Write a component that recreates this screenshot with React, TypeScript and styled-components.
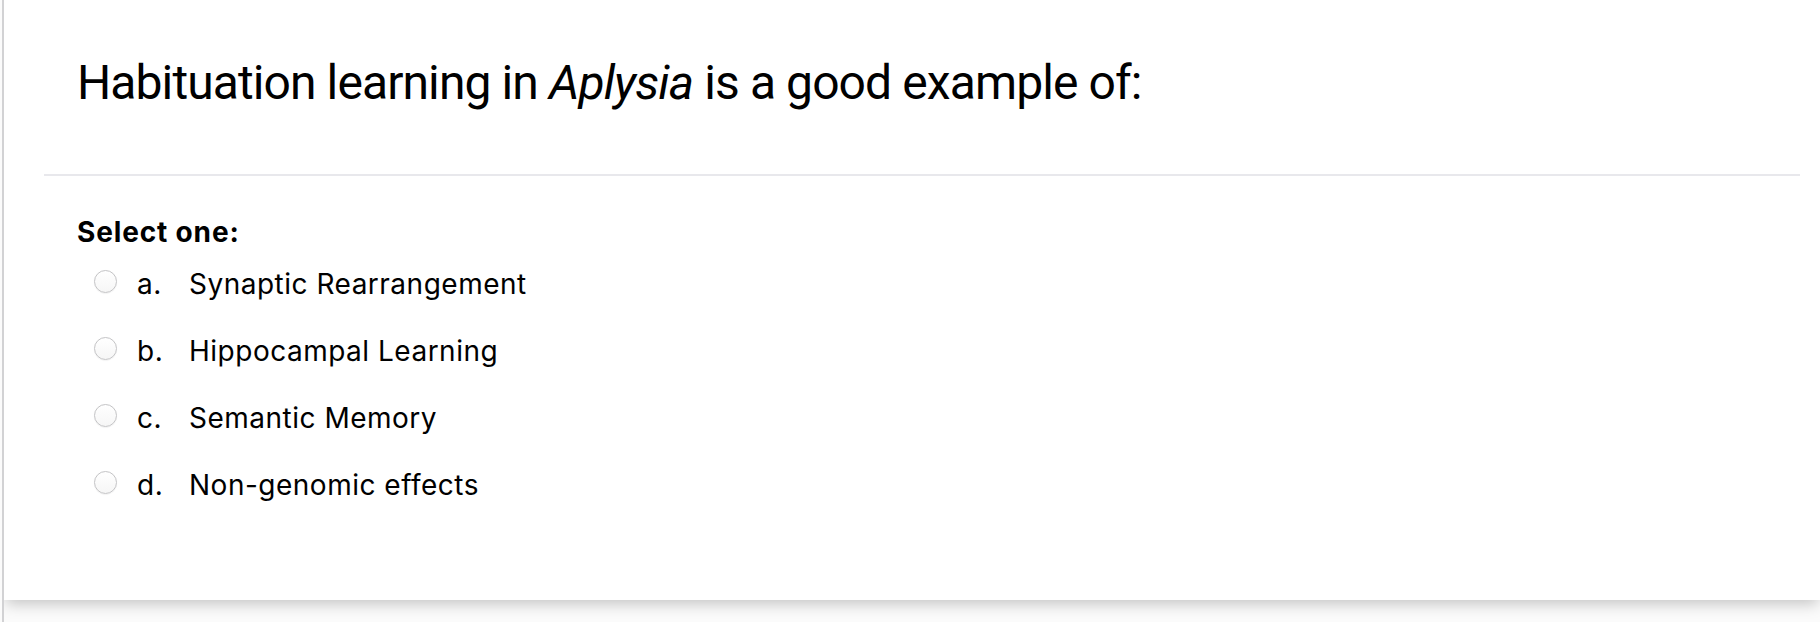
import React from "react";
import styled, { createGlobalStyle } from "styled-components";

const GlobalStyle = createGlobalStyle`
  html, body {
    margin: 0;
    padding: 0;
    background: #ffffff;
  }
  body {
    font-family: Inter, "Noto Sans", sans-serif;
    color: #000;
  }
`;

const Page = styled.div`
  width: 1820px;
  height: 622px;
  box-sizing: border-box;
  padding-left: 2px;
  background: #fbfbfb;
  overflow: hidden;
`;

const Frame = styled.div`
  height: 100%;
  border-left: 2px solid #d2d2d4;
  overflow: hidden;
`;

const Card = styled.section`
  height: 600px;
  background: #ffffff;
  box-shadow: 0 6px 14px -2px rgba(0, 0, 0, 0.22);
  box-sizing: border-box;
`;

const Header = styled.div`
  padding: 53px 0 0 73px;
`;

const Title = styled.h2`
  margin: 0;
  font-family: Roboto, Inter, "Noto Sans", sans-serif;
  font-weight: 400;
  font-size: 48px;
  line-height: 59px;
  letter-spacing: -0.9px;
  color: #000;
  em {
    font-style: italic;
  }
`;

const Divider = styled.hr`
  margin: 62px 20px 0 40px;
  border: none;
  height: 2px;
  background: #e8e8ec;
`;

const Body = styled.div`
  padding: 39px 0 0 73px;
`;

const Prompt = styled.div`
  font-weight: 700;
  font-size: 28px;
  line-height: 34px;
  letter-spacing: 0.85px;
`;

const Options = styled.div`
  margin-top: 18px;
  display: flex;
  flex-direction: column;
  gap: 33px;
`;

const Option = styled.label`
  display: flex;
  align-items: flex-start;
  font-size: 28px;
  line-height: 34px;
  letter-spacing: 0.5px;
`;

const Radio = styled.input.attrs({ type: "radio" })`
  appearance: none;
  -webkit-appearance: none;
  margin: 3px 20px 0 17px;
  width: 23px;
  height: 23px;
  flex: none;
  border-radius: 50%;
  box-sizing: border-box;
  border: 1px solid #c4c4c6;
  background: linear-gradient(#ffffff, #f6f6f6);
  box-shadow: 0 0.5px 1px rgba(0, 0, 0, 0.08);
`;

const Letter = styled.span`
  width: 52px;
  flex: none;
`;

const Text = styled.span``;

const options = [
  { letter: "a.", text: "Synaptic Rearrangement" },
  { letter: "b.", text: "Hippocampal Learning" },
  { letter: "c.", text: "Semantic Memory" },
  { letter: "d.", text: "Non-genomic effects" },
];

export default function App() {
  return (
    <>
      <GlobalStyle />
      <Page>
        <Frame>
          <Card>
            <Header>
              <Title>
                Habituation learning in <em>Aplysia</em> is a good example of:
              </Title>
            </Header>
            <Divider />
            <Body>
              <Prompt>Select one:</Prompt>
              <Options>
                {options.map((o) => (
                  <Option key={o.letter}>
                    <Radio name="answer" />
                    <Letter>{o.letter}</Letter>
                    <Text>{o.text}</Text>
                  </Option>
                ))}
              </Options>
            </Body>
          </Card>
        </Frame>
      </Page>
    </>
  );
}
